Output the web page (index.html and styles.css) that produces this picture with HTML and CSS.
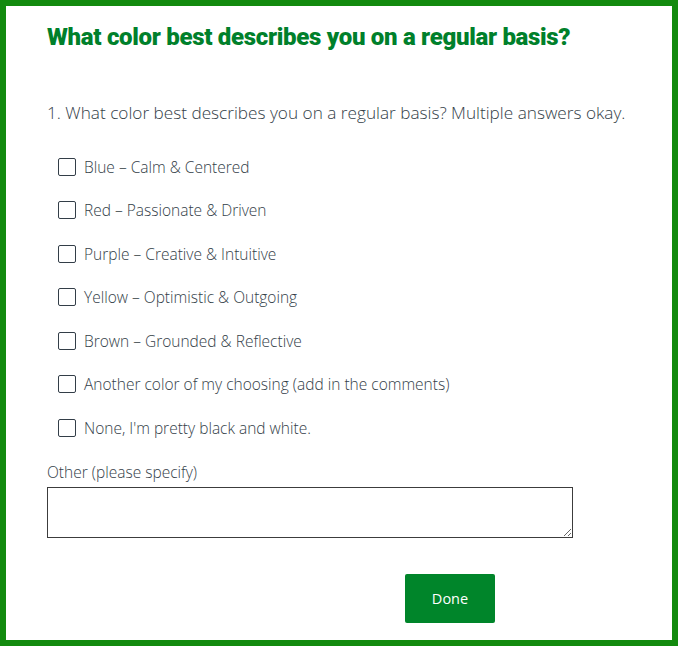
FILE: index.html
```html
<!DOCTYPE html>
<html lang="en">
<head>
<meta charset="utf-8">
<title>Survey</title>
<link rel="stylesheet" href="styles.css">
</head>
<body>
<div class="frame">
  <h1 class="title">What color best describes you on a regular basis?</h1>
  <p class="question">1. What color best describes you on a regular basis? Multiple answers okay.</p>
  <ul class="options">
    <li class="option"><span class="box"></span><span class="label">Blue – Calm &amp; Centered</span></li>
    <li class="option"><span class="box"></span><span class="label">Red – Passionate &amp; Driven</span></li>
    <li class="option"><span class="box"></span><span class="label">Purple – Creative &amp; Intuitive</span></li>
    <li class="option"><span class="box"></span><span class="label">Yellow – Optimistic &amp; Outgoing</span></li>
    <li class="option"><span class="box"></span><span class="label">Brown – Grounded &amp; Reflective</span></li>
    <li class="option"><span class="box"></span><span class="label">Another color of my choosing (add in the comments)</span></li>
    <li class="option"><span class="box"></span><span class="label">None, I'm pretty black and white.</span></li>
  </ul>
  <div class="other">
    <div class="other-label">Other (please specify)</div>
    <textarea class="other-input"></textarea>
  </div>
  <div class="actions">
    <button class="done">Done</button>
  </div>
</div>
</body>
</html>
```
FILE: styles.css
```css
html, body {
  margin: 0;
  padding: 0;
  background: #ffffff;
}
.frame {
  box-sizing: border-box;
  width: 678px;
  height: 646px;
  border: 6px solid #128a0e;
  padding: 16px 0 0 41px;
  font-family: "Open Sans", "Noto Sans", sans-serif;
  color: #333e48;
}
.title {
  margin: 0;
  font-family: "Roboto", sans-serif;
  font-weight: 900;
  font-size: 24px;
  letter-spacing: -0.3px;
  line-height: 30px;
  color: #00802b;
}
.question {
  margin: 49px 0 0 0;
  font-size: 17.2px;
  font-weight: 300;
  line-height: 24px;
}
.options {
  list-style: none;
  margin: 20px 0 0 0;
  padding: 0 0 0 11px;
}
.option {
  display: flex;
  align-items: center;
  height: 43.5px;
}
.box {
  box-sizing: border-box;
  width: 18px;
  height: 18px;
  border: 1.5px solid #333e48;
  border-radius: 2px;
  margin-right: 8px;
  flex: none;
}
.label {
  font-size: 15.5px;
  font-weight: 300;
}
.other {
  margin-top: 12px;
}
.other-label {
  font-size: 15.5px;
  font-weight: 300;
  line-height: 20px;
}
.other-input {
  display: block;
  box-sizing: border-box;
  margin-top: 5px;
  width: 526px;
  height: 51px;
  border: 1px solid #3c3c3c;
  border-radius: 0;
  padding: 4px;
  font-family: inherit;
}
.actions {
  display: flex;
  margin-top: 36px;
  padding-left: 358px;
}
.done {
  width: 90px;
  height: 49px;
  border: none;
  border-radius: 2px;
  background: #00852a;
  color: #ffffff;
  font-family: "Open Sans", sans-serif;
  font-size: 14.5px;
  font-weight: 400;
}
```
